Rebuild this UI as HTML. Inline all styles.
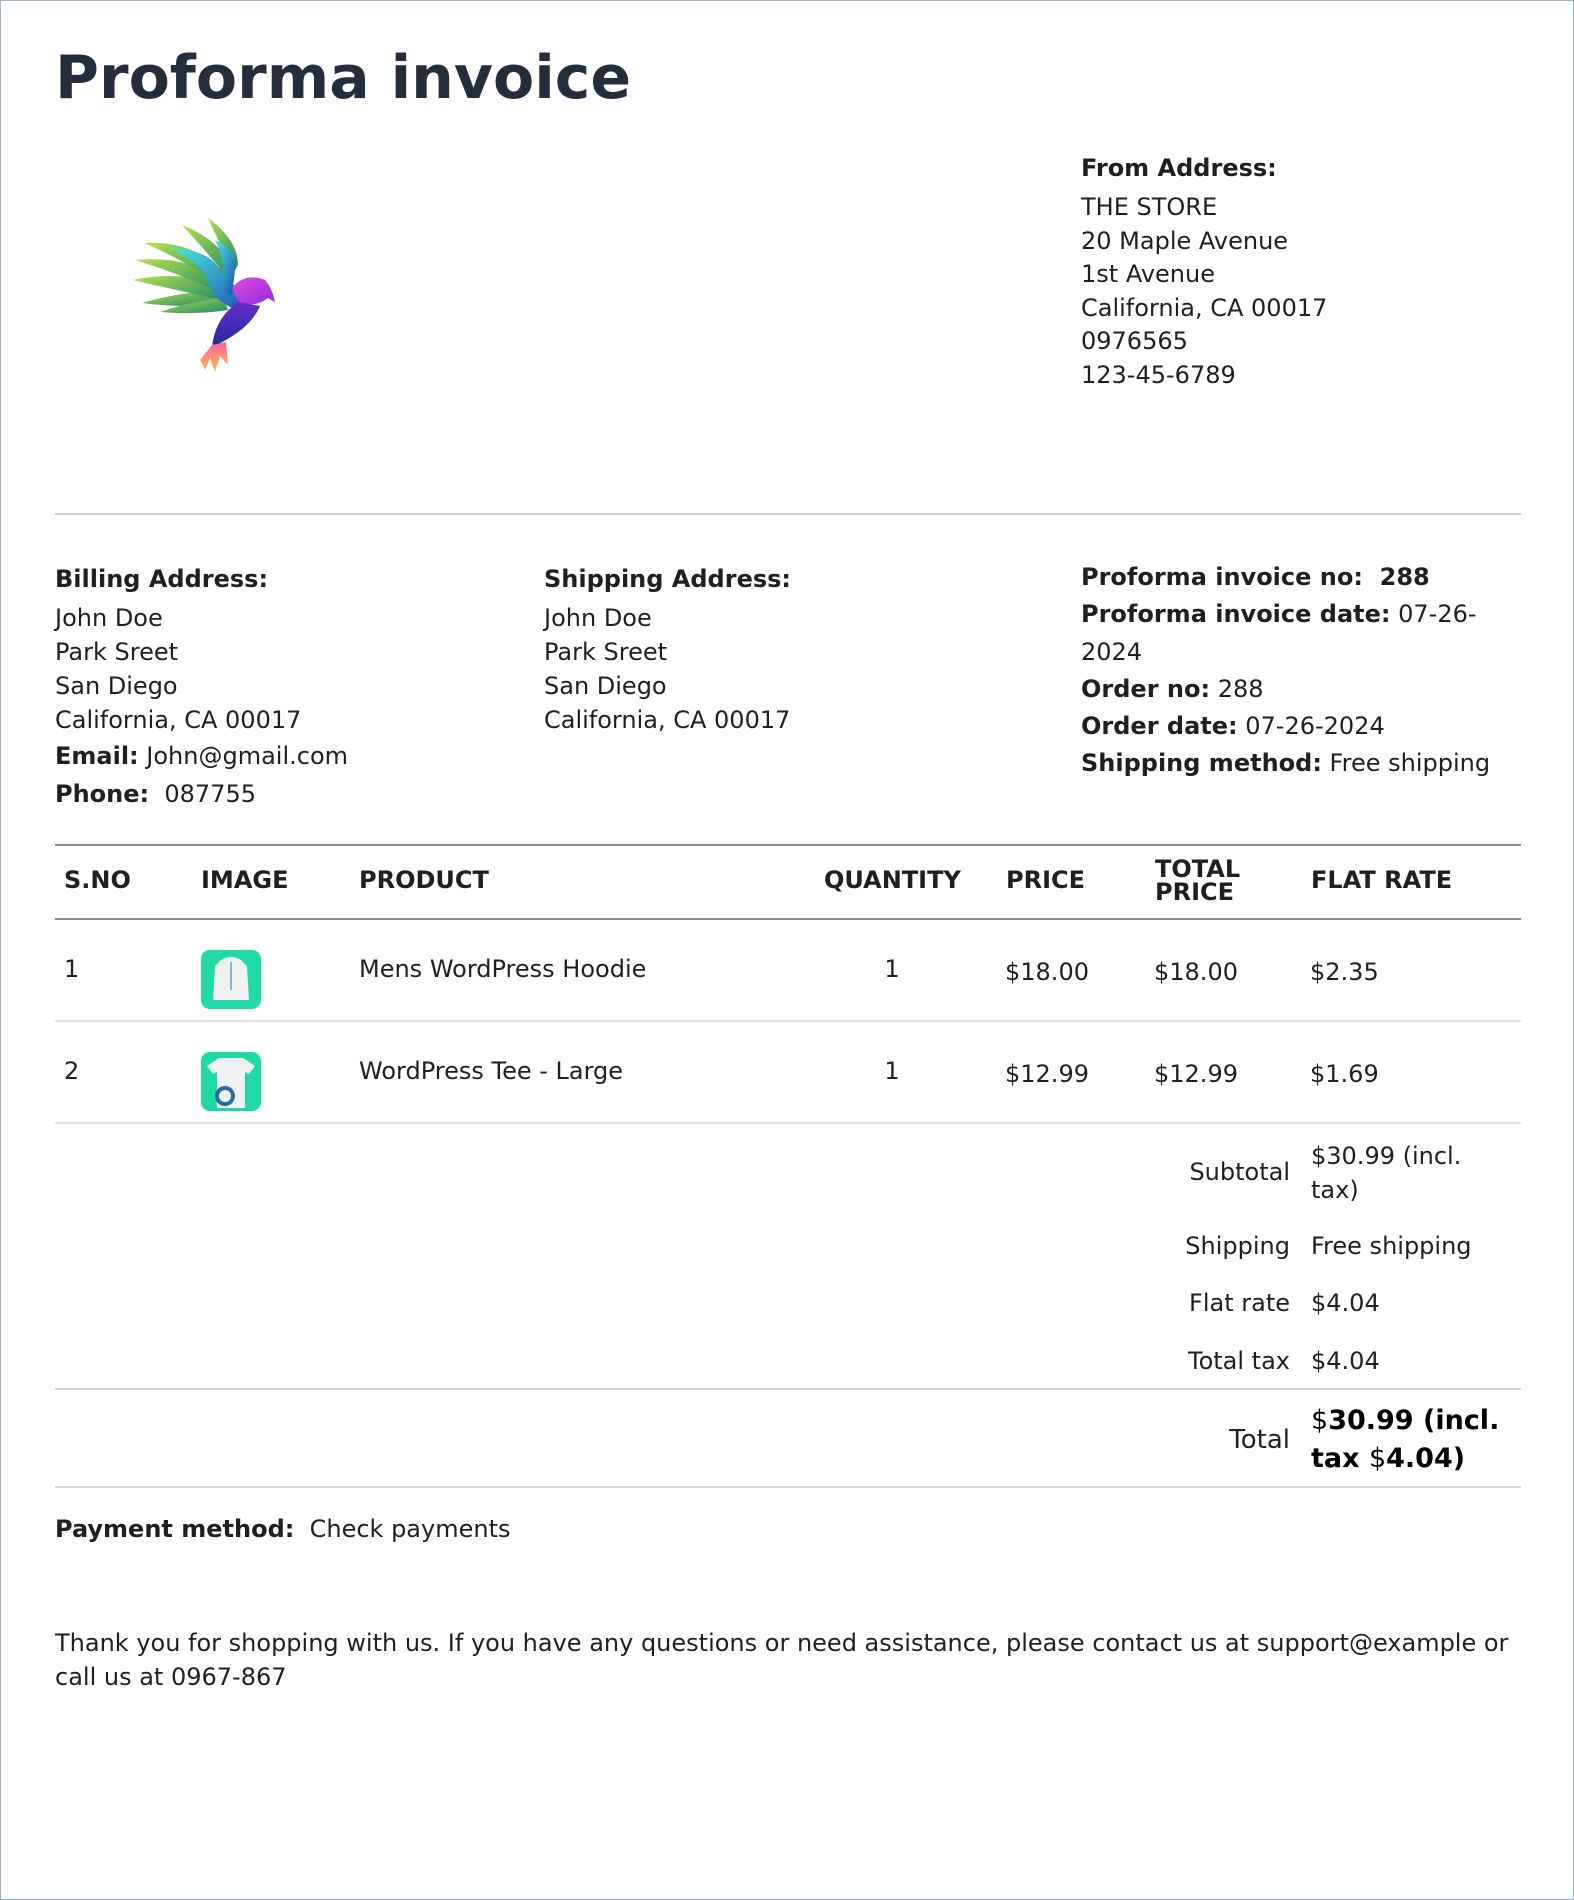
<!DOCTYPE html>
<html><head><meta charset="utf-8"><style>
html,body{margin:0;padding:0;background:#fff}
body{width:1574px;height:1900px;position:relative;overflow:hidden;font-family:"DejaVu Sans","Liberation Sans",sans-serif;color:#1f1f1f}
.frame{position:absolute;left:0;top:0;width:1572px;height:1898px;border:1px solid #9db4c6}
.t{position:absolute;font-size:24px;line-height:34px;white-space:nowrap}
b{font-weight:bold}
.h{font-weight:bold}
.ln{position:absolute;left:55px;width:1466px;height:2px}
.img{position:absolute;left:201px;width:60px;height:59px;border-radius:9px;background:#1fd9a6}
.r{text-align:right}
</style></head><body>
<div class="frame"></div>
<div style="position:absolute;left:55px;top:48px;font-size:60px;line-height:60px;font-weight:bold;color:#232d3c;white-space:nowrap">Proforma invoice</div>

<svg style="position:absolute;left:120px;top:210px" width="170" height="170" viewBox="0 0 170 170">
<defs>
<linearGradient id="g1" x1="0" y1="0" x2="1" y2="1"><stop offset="0" stop-color="#b6e04a"/><stop offset="1" stop-color="#1b8a6a"/></linearGradient>
<linearGradient id="g2" x1="0" y1="0" x2="1" y2="1"><stop offset="0" stop-color="#4de8e0"/><stop offset="1" stop-color="#1a4fb0"/></linearGradient>
<linearGradient id="g3" x1="0" y1="0" x2="1" y2="1"><stop offset="0" stop-color="#e44ad8"/><stop offset="1" stop-color="#8a2be2"/></linearGradient>
<linearGradient id="g4" x1="0" y1="0" x2="0" y2="1"><stop offset="0" stop-color="#6a2ad0"/><stop offset="1" stop-color="#1c2d9a"/></linearGradient>
<linearGradient id="g5" x1="0" y1="0" x2="0" y2="1"><stop offset="0" stop-color="#ff5fa0"/><stop offset="1" stop-color="#ffc24a"/></linearGradient>
</defs>
<path d="M105 95 Q60 98 22 93 Q60 82 100 80 Z" fill="url(#g1)"/>
<path d="M104 90 Q55 80 13 70 Q60 60 102 75 Z" fill="url(#g1)"/>
<path d="M104 84 Q55 62 15 50 Q65 45 104 70 Z" fill="url(#g1)"/>
<path d="M106 78 Q60 48 24 33 Q75 30 108 66 Z" fill="url(#g1)"/>
<path d="M108 100 Q75 105 40 102 Q75 90 104 88 Z" fill="url(#g1)"/>
<path d="M110 70 Q85 40 62 15 Q100 30 114 60 Z" fill="url(#g1)"/>
<path d="M114 62 Q98 30 88 8 Q118 30 118 55 Z" fill="url(#g1)"/>
<path d="M50 38 Q90 40 100 60 Q110 80 135 80 L120 100 Q95 95 88 70 Q80 52 50 38 Z" fill="url(#g2)"/>
<path d="M95 30 Q118 40 115 60 L112 85 L100 80 Q108 55 95 30 Z" fill="url(#g2)"/>
<path d="M112 78 Q125 62 145 70 Q152 78 155 92 L148 88 Q138 96 120 95 Z" fill="url(#g3)"/>
<path d="M118 92 L140 96 Q130 120 92 137 Q95 108 118 92 Z" fill="url(#g4)"/>
<path d="M92 135 L80 150 L85 160 L90 148 L95 162 L100 146 L108 155 L106 132 Z" fill="url(#g5)"/>
</svg>

<div class="t h" style="left:1081px;top:151px">From Address:</div>
<div class="t" style="left:1081px;top:191px;line-height:33.5px">THE STORE<br>20 Maple Avenue<br>1st Avenue<br>California, CA 00017<br>0976565<br>123-45-6789</div>

<div class="ln" style="top:513px;background:#cfcfcf"></div>

<div class="t h" style="left:55px;top:562px">Billing Address:</div>
<div class="t" style="left:55px;top:601px">John Doe<br>Park Sreet<br>San Diego<br>California, CA 00017</div>
<div class="t" style="left:55px;top:739px"><b>Email:</b> John@gmail.com</div>
<div class="t" style="left:55px;top:777px"><b>Phone:</b>&nbsp; 087755</div>

<div class="t h" style="left:544px;top:562px">Shipping Address:</div>
<div class="t" style="left:544px;top:601px">John Doe<br>Park Sreet<br>San Diego<br>California, CA 00017</div>

<div class="t" style="left:1081px;top:559px;line-height:37.3px"><b>Proforma invoice no:&nbsp; 288</b><br><b>Proforma invoice date:</b> 07-26-<br>2024<br><b>Order no:</b> 288<br><b>Order date:</b> 07-26-2024<br><b>Shipping method:</b> Free shipping</div>

<div class="ln" style="top:844px;background:#8a8a8a"></div>
<div class="t h" style="left:64px;top:863px">S.NO</div>
<div class="t h" style="left:201px;top:863px">IMAGE</div>
<div class="t h" style="left:359px;top:863px">PRODUCT</div>
<div class="t h" style="left:824px;top:863px">QUANTITY</div>
<div class="t h" style="left:1006px;top:863px">PRICE</div>
<div class="t h" style="left:1155px;top:858px;line-height:23px">TOTAL<br>PRICE</div>
<div class="t h" style="left:1311px;top:863px">FLAT RATE</div>
<div class="ln" style="top:918px;background:#8a8a8a"></div>

<div class="t" style="left:64px;top:952px">1</div>
<div class="img" style="top:950px"><svg width="60" height="59" viewBox="0 0 60 59"><path d="M20 10 Q30 4 40 10 L46 16 L48 50 L12 50 L14 16 Z" fill="#eef0f2"/><path d="M30 12 L30 40" stroke="#5aa7c8" stroke-width="1.5"/></svg></div>
<div class="t" style="left:359px;top:952px">Mens WordPress Hoodie</div>
<div class="t" style="left:872px;top:952px;width:40px;text-align:center">1</div>
<div class="t" style="left:1005px;top:955px">$18.00</div>
<div class="t" style="left:1154px;top:955px">$18.00</div>
<div class="t" style="left:1310px;top:955px">$2.35</div>
<div class="ln" style="top:1020px;background:#e2e2e2"></div>

<div class="t" style="left:64px;top:1054px">2</div>
<div class="img" style="top:1052px"><svg width="60" height="59" viewBox="0 0 60 59"><path d="M18 6 L42 6 L54 14 L48 22 L44 20 L44 56 L16 56 L16 20 L12 22 L6 14 Z" fill="#eef0f2"/><circle cx="24" cy="44" r="10" fill="#2b6a9c"/><circle cx="24" cy="44" r="6" fill="#eef0f2"/></svg></div>
<div class="t" style="left:359px;top:1054px">WordPress Tee - Large</div>
<div class="t" style="left:872px;top:1054px;width:40px;text-align:center">1</div>
<div class="t" style="left:1005px;top:1057px">$12.99</div>
<div class="t" style="left:1154px;top:1057px">$12.99</div>
<div class="t" style="left:1310px;top:1057px">$1.69</div>
<div class="ln" style="top:1122px;background:#e2e2e2"></div>

<div class="t r" style="left:990px;width:300px;top:1155px">Subtotal</div>
<div class="t" style="left:1311px;top:1139px">$30.99 (incl.<br>tax)</div>
<div class="t r" style="left:990px;width:300px;top:1229px">Shipping</div>
<div class="t" style="left:1311px;top:1229px">Free shipping</div>
<div class="t r" style="left:990px;width:300px;top:1286px">Flat rate</div>
<div class="t" style="left:1311px;top:1286px">$4.04</div>
<div class="t r" style="left:990px;width:300px;top:1344px">Total tax</div>
<div class="t" style="left:1311px;top:1344px">$4.04</div>
<div class="ln" style="top:1388px;background:#d4d4d4"></div>
<div class="t r" style="left:990px;width:300px;top:1421px;font-size:26px;line-height:38px">Total</div>
<div class="t" style="left:1311px;top:1402px;font-size:27px;line-height:38px;color:#000">$<b>30.99 (incl.</b><br><b>tax </b>$<b>4.04)</b></div>
<div class="ln" style="top:1486px;background:#d4d4d4"></div>

<div class="t" style="left:55px;top:1512px"><b>Payment method:</b>&nbsp; Check payments</div>
<div class="t" style="left:55px;top:1626px">Thank you for shopping with us. If you have any questions or need assistance, please contact us at support@example or</div>
<div class="t" style="left:55px;top:1660px">call us at 0967-867</div>
</body></html>
